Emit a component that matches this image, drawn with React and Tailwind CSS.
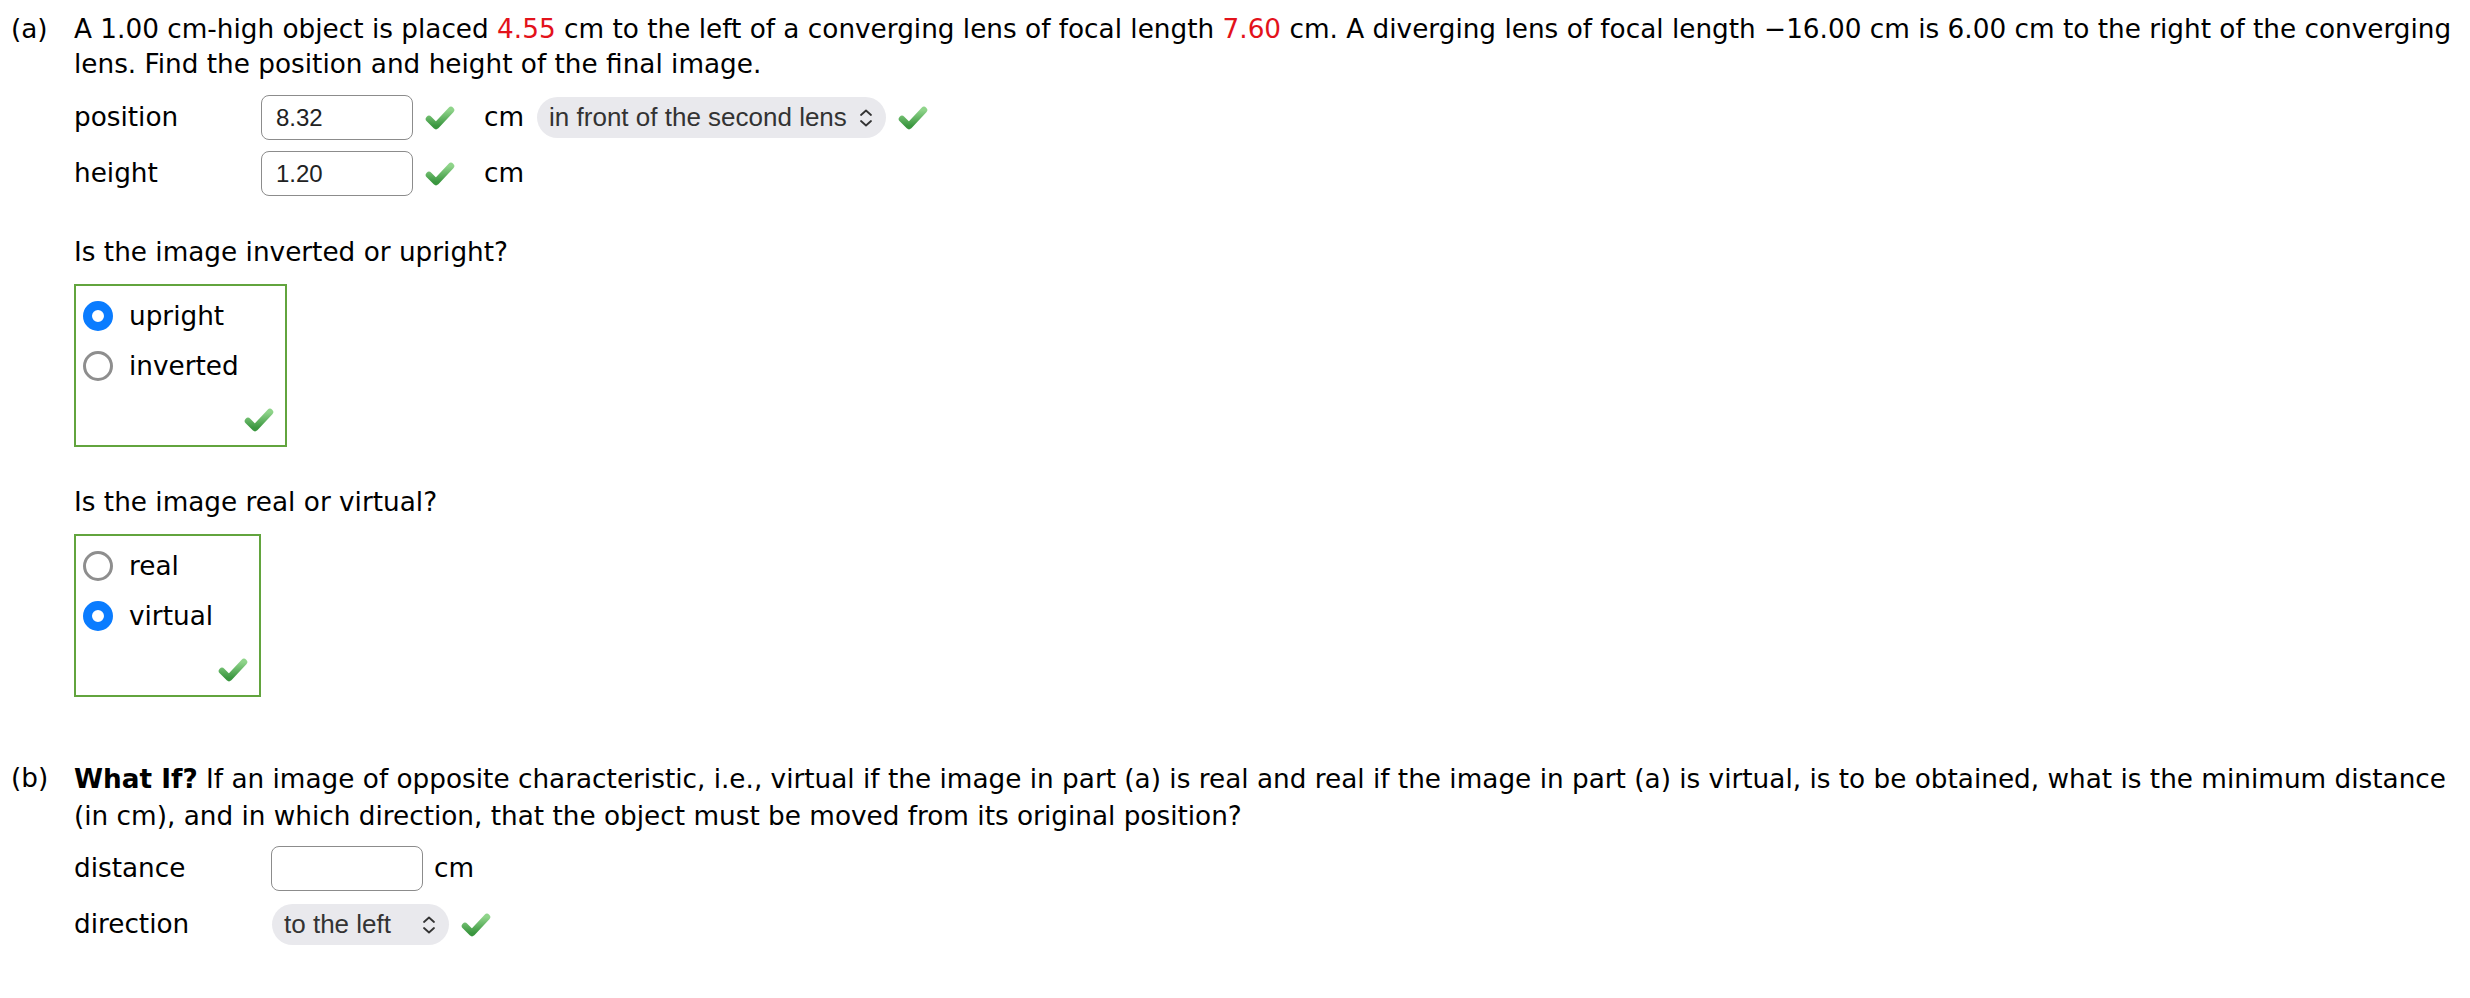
import React from "react";

const CheckMark = ({ className = "" }) => (
  <svg width="30" height="26" viewBox="0 0 30 26" className={className}>
    <defs>
      <linearGradient id="chk" x1="0" y1="0" x2="0" y2="1">
        <stop offset="0" stopColor="#8fd48a" />
        <stop offset="1" stopColor="#3a963f" />
      </linearGradient>
    </defs>
    <path
      d="M4 14 L11 21 L26 5"
      fill="none"
      stroke="url(#chk)"
      strokeWidth="6.5"
      strokeLinecap="round"
      strokeLinejoin="round"
    />
  </svg>
);

const Chevrons = () => (
  <svg width="16" height="20" viewBox="0 0 16 20" className="shrink-0">
    <path d="M3 7 L8 2.5 L13 7" fill="none" stroke="#333" strokeWidth="1.8" strokeLinecap="round" strokeLinejoin="round" />
    <path d="M3 13 L8 17.5 L13 13" fill="none" stroke="#333" strokeWidth="1.8" strokeLinecap="round" strokeLinejoin="round" />
  </svg>
);

const TextBox = ({ value }) => (
  <div className="w-[152px] h-[45px] border-[1.5px] border-[#8c8c8c] rounded-[8px] flex items-center px-[14px] font-['Liberation_Sans'] text-[24px] text-[#222]">
    {value}
  </div>
);

const SelectPill = ({ label, className = "" }) => (
  <div className={"h-[41px] bg-[#e9e9ed] rounded-full flex items-center justify-between pl-[12px] pr-[12px] font-['Liberation_Sans'] text-[26px] text-[#333] " + className}>
    <span>{label}</span>
    <Chevrons />
  </div>
);

const Radio = ({ checked, label }) => (
  <div className="flex items-center h-[30px] gap-[16px]">
    {checked ? (
      <div className="w-[30px] h-[30px] rounded-full border-[9px] border-[#0a7cff] bg-white shrink-0" />
    ) : (
      <div className="w-[30px] h-[30px] rounded-full border-[3px] border-[#8e8e8e] bg-white shrink-0" />
    )}
    <span>{label}</span>
  </div>
);

const RadioBox = ({ options }) => (
  <div className="inline-flex flex-col border-2 border-[#62a43e] pl-[7px] pr-[46px] pt-[15px] pb-[12px] relative">
    <div className="flex flex-col gap-[20px]">
      {options.map((o, i) => (
        <Radio key={i} checked={o.checked} label={o.label} />
      ))}
    </div>
    <div className="h-[27px] mt-[25px]" />
    <CheckMark className="absolute right-[11px] bottom-[12px]" />
  </div>
);

export default function App() {
  return (
    <div className="min-h-screen bg-white text-black font-['DejaVu_Sans','Verdana',sans-serif] text-[26.3px] leading-[35px]">
      {/* part a */}
      <div className="flex pl-[11px] pt-[12px] pr-[12px]">
        <div className="w-[63px] shrink-0">(a)</div>
        <div className="flex-1">
          <p>
            A 1.00 cm-high object is placed <span className="text-[#e3121b]">4.55</span> cm to the left of a converging lens of focal length{" "}
            <span className="text-[#e3121b]">7.60</span> cm. A diverging lens of focal length −16.00 cm is 6.00 cm to the right of the converging
            lens. Find the position and height of the final image.
          </p>

          <div className="mt-[13px] flex flex-col gap-[11px]">
            <div className="flex items-center">
              <div className="w-[187px]">position</div>
              <TextBox value="8.32" />
              <CheckMark className="ml-[12px]" />
              <div className="ml-[29px]">cm</div>
              <SelectPill label="in front of the second lens" className="ml-[13px] w-[349px]" />
              <CheckMark className="ml-[12px]" />
            </div>
            <div className="flex items-center">
              <div className="w-[187px]">height</div>
              <TextBox value="1.20" />
              <CheckMark className="ml-[12px]" />
              <div className="ml-[29px]">cm</div>
            </div>
          </div>

          <p className="mt-[39px]">Is the image inverted or upright?</p>
          <div className="mt-[14px]">
            <RadioBox
              options={[
                { label: "upright", checked: true },
                { label: "inverted", checked: false },
              ]}
            />
          </div>

          <p className="mt-[38px]">Is the image real or virtual?</p>
          <div className="mt-[14px]">
            <RadioBox
              options={[
                { label: "real", checked: false },
                { label: "virtual", checked: true },
              ]}
            />
          </div>
        </div>
      </div>

      {/* part b */}
      <div className="flex pl-[11px] pt-[64px] pr-[12px] pb-[40px]">
        <div className="w-[63px] shrink-0">(b)</div>
        <div className="flex-1">
          <p className="leading-[37px]">
            <span className="font-bold">What If?</span> If an image of opposite characteristic, i.e., virtual if the image in part (a) is real and
            real if the image in part (a) is virtual, is to be obtained, what is the minimum distance (in cm), and in which direction, that the
            object must be moved from its original position?
          </p>

          <div className="mt-[11px] flex flex-col gap-[13px]">
            <div className="flex items-center">
              <div className="w-[197px]">distance</div>
              <TextBox value="" />
              <div className="ml-[11px]">cm</div>
            </div>
            <div className="flex items-center">
              <div className="w-[198px]">direction</div>
              <SelectPill label="to the left" className="w-[177px]" />
              <CheckMark className="ml-[12px]" />
            </div>
          </div>
        </div>
      </div>
    </div>
  );
}
